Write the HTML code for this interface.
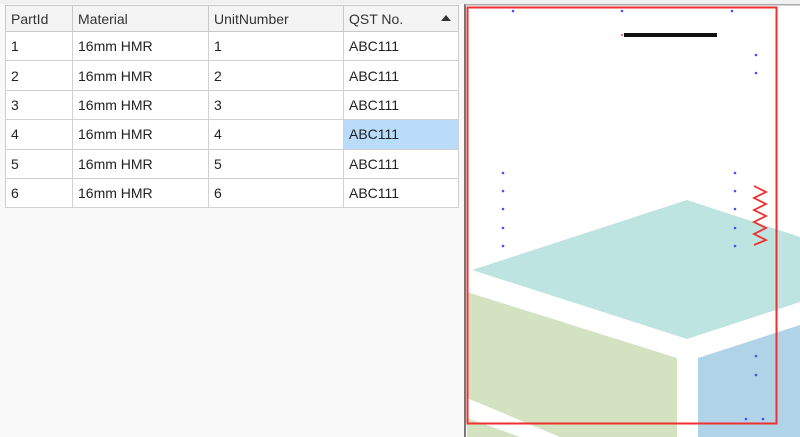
<!DOCTYPE html>
<html><head><style>
body{margin:0;width:800px;height:437px;overflow:hidden;background:#f9f9f9;font-family:"Liberation Sans",sans-serif;position:relative}
table{position:absolute;left:5px;top:5px;border-collapse:collapse;font-size:14px;color:#222;background:#fff}
td,th{border:1px solid #d0d0d0;height:29.4px;padding:0 0 0 5px;text-align:left;font-weight:normal;box-sizing:border-box}
th{background:#f4f4f4;height:26px;border-color:#c8c8c8;color:#333}
.sel{background:#b9dcfb}
</style></head><body>
<div style="position:absolute;left:0;top:0;width:800px;height:4px;background:#f0f0f0"></div>
<table>
<tr><th style="width:67px">PartId</th><th style="width:136px">Material</th><th style="width:135px">UnitNumber</th><th style="width:115px;position:relative">QST No.<span style="position:absolute;right:7px;top:9px;width:0;height:0;border-left:5px solid transparent;border-right:5px solid transparent;border-bottom:6px solid #333"></span></th></tr>
<tr><td>1</td><td>16mm HMR</td><td>1</td><td>ABC111</td></tr>
<tr><td>2</td><td>16mm HMR</td><td>2</td><td>ABC111</td></tr>
<tr><td>3</td><td>16mm HMR</td><td>3</td><td>ABC111</td></tr>
<tr><td>4</td><td>16mm HMR</td><td>4</td><td class="sel">ABC111</td></tr>
<tr><td>5</td><td>16mm HMR</td><td>5</td><td>ABC111</td></tr>
<tr><td>6</td><td>16mm HMR</td><td>6</td><td>ABC111</td></tr>
</table>
<svg style="position:absolute;left:0;top:0" width="800" height="437">
<rect x="465" y="4" width="335" height="433" fill="#fff"/>
<rect x="464" y="4" width="2" height="433" fill="#777"/>
<rect x="465" y="4" width="335" height="1.5" fill="#aaa"/>
<polygon points="472,270 687,200 800,237 800,302 687,339" fill="#bde4e0"/>
<polygon points="467,292 677,358 677,437 467,437" fill="#d3e3c1"/>
<polygon points="467,398 560,437 520,437 467,418" fill="#fff"/>
<polygon points="698,358 800,325 800,437 698,437" fill="#b0d3e8"/>
<rect x="467.5" y="7.5" width="309" height="416" fill="none" stroke="#f03030" stroke-width="2"/>
<rect x="624" y="33" width="93" height="4" fill="#111"/>
<circle cx="622" cy="35" r="1" fill="#f44"/>
<polyline points="754,186 766,192 754,198 766,204 754,210 766,216 754,222 766,228 754,234 766,240 754,245" fill="none" stroke="#f03030" stroke-width="1.8"/>
<g fill="#4450ff">
<circle cx="513" cy="11" r="1.3"/><circle cx="622" cy="11" r="1.3"/><circle cx="732" cy="11" r="1.3"/>
<circle cx="756" cy="55" r="1.3"/><circle cx="756" cy="73" r="1.3"/>
<circle cx="503" cy="173" r="1.3"/><circle cx="503" cy="191" r="1.3"/><circle cx="503" cy="209" r="1.3"/><circle cx="503" cy="228" r="1.3"/><circle cx="503" cy="246" r="1.3"/>
<circle cx="735" cy="173" r="1.3"/><circle cx="735" cy="191" r="1.3"/><circle cx="735" cy="209" r="1.3"/><circle cx="735" cy="228" r="1.3"/><circle cx="735" cy="246" r="1.3"/>
<circle cx="756" cy="356" r="1.3"/><circle cx="756" cy="375" r="1.3"/>
<circle cx="746" cy="419" r="1.3"/><circle cx="763" cy="419" r="1.3"/>
</g>
</svg>
</body></html>
